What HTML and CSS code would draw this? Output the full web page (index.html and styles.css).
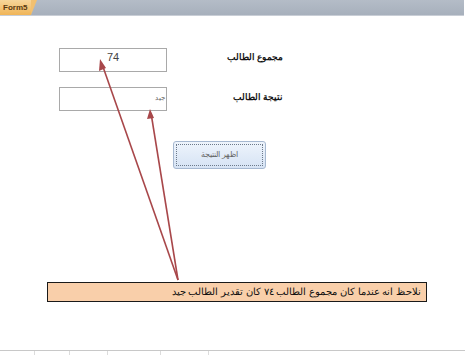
FILE: index.html
```html
<!DOCTYPE html>
<html lang="ar">
<head>
<meta charset="utf-8">
<link rel="stylesheet" href="styles.css">
</head>
<body>
<div class="page">
  <div class="tabbar">
    <div class="tab">Form5</div>
  </div>
  <div class="canvas">
    <div class="row row1">
      <div class="textbox center">74</div>
      <div class="label">مجموع الطالب</div>
    </div>
    <div class="row row2">
      <div class="textbox right"><span class="small">جيد</span></div>
      <div class="label">نتيجة الطالب</div>
    </div>
    <div class="btnrow">
      <div class="button"><div class="focus">اظهر النتيجة</div></div>
    </div>
    <div class="note" dir="rtl">نلاحظ انه عندما كان مجموع الطالب ٧٤ كان تقدير الطالب جيد</div>
    <div class="statusline"></div>
    <div class="statusbar">
      <span class="seg s1"></span><span class="seg s2"></span><span class="seg s3"></span><span class="seg s4"></span><span class="seg s5"></span>
    </div>
  </div>
  <svg class="arrows" width="474" height="355" viewBox="0 0 474 355">
    <g stroke="#a8474a" stroke-width="1.6" fill="none">
      <line x1="178" y1="280" x2="102" y2="64"/>
      <line x1="178" y1="280" x2="151" y2="113"/>
    </g>
    <g fill="#a8474a">
      <polygon points="100,59 99,71 106,68"/>
      <polygon points="150,109 147,119 154,118"/>
    </g>
  </svg>
</div>
</body>
</html>
```
FILE: styles.css
```css
html, body {
  margin: 0;
  padding: 0;
  background: #ffffff;
}
.page {
  position: relative;
  width: 474px;
  height: 355px;
  overflow: hidden;
  font-family: "Liberation Sans", Arial, sans-serif;
}
.tabbar {
  width: 464px;
  height: 15px;
  background: linear-gradient(#b4bcc7, #a7b0bc);
  border-bottom: 1px solid #c9ced6;
}
.tab {
  width: 28px;
  height: 15px;
  padding-left: 3px;
  background: linear-gradient(#f7d69a, #f0b558);
  font-size: 8px;
  font-weight: bold;
  color: #5a3a10;
  line-height: 15px;
  position: relative;
}
.tab::after {
  content: "";
  position: absolute;
  right: -6px;
  top: 0;
  border-left: 6px solid #f2c070;
  border-top: 15px solid transparent;
  transform: scaleY(-1);
}
.canvas {
  display: flex;
  flex-direction: column;
}
.row {
  display: flex;
  align-items: center;
  width: 283px;
  padding-left: 59px;
  box-sizing: border-box;
}
.row1 { margin-top: 32px; }
.row2 { margin-top: 15px; }
.textbox {
  width: 108px;
  height: 24px;
  box-sizing: border-box;
  border: 1px solid #a9a9a9;
  background: #fff;
  color: #444;
  font-size: 11px;
}
.textbox.center {
  text-align: center;
  padding-top: 2px;
}
.textbox.right {
  text-align: right;
  padding-top: 2px;
  padding-right: 1px;
}
.small {
  font-size: 7px;
  color: #666;
}
.label {
  flex: 1;
  text-align: right;
  font-size: 8.5px;
  font-weight: bold;
  color: #111;
  direction: rtl;
}
.row1 .label { padding-bottom: 6px; }
.row2 .label { padding-bottom: 4px; }
.btnrow {
  margin-top: 30px;
  padding-left: 173px;
}
.button {
  width: 93px;
  height: 28px;
  box-sizing: border-box;
  border: 1px solid #a6b8d0;
  border-radius: 3px;
  background: linear-gradient(#eef4fc, #d6e3f4);
  padding: 2px;
}
.focus {
  height: 100%;
  box-sizing: border-box;
  border: 1px dotted #6d7a8a;
  font-size: 7.5px;
  color: #666;
  text-align: center;
  line-height: 20px;
  direction: rtl;
}
.note {
  margin-top: 113px;
  margin-left: 47px;
  width: 380px;
  height: 20px;
  box-sizing: border-box;
  border: 1.5px solid #1a1a1a;
  background: #f9cfaa;
  font-size: 9.8px;
  color: #111;
  padding-right: 5px;
  line-height: 17px;
}
.statusline {
  margin-top: 48px;
  width: 465px;
  height: 1px;
  background: #c8c8c8;
}
.statusbar {
  display: flex;
  height: 4px;
}
.seg {
  height: 4px;
  border-right: 1px solid #dcdcdc;
}
.s1 { width: 34px; }
.s2 { width: 34px; }
.s3 { width: 37px; }
.s4 { width: 52px; }
.s5 { width: 47px; }
.arrows {
  position: absolute;
  left: 0;
  top: 0;
  pointer-events: none;
}
```
